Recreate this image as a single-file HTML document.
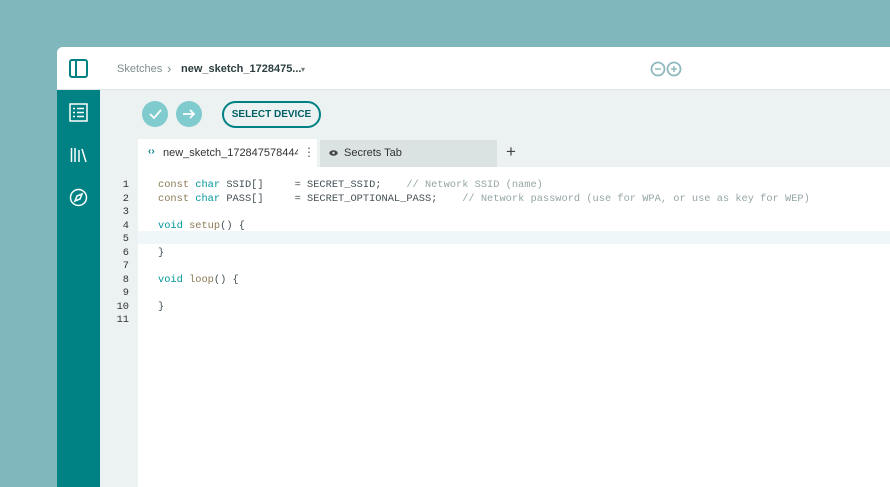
<!DOCTYPE html>
<html><head><style>
*{margin:0;padding:0;box-sizing:border-box}
body{width:890px;height:485px;background:#7fb7bc;position:relative;overflow:hidden;font-family:"Liberation Sans",sans-serif}
.win{position:absolute;left:57px;top:47px;width:840px;height:440px;background:#ecf1f1;border-top-left-radius:6px;overflow:hidden}
.hdr{position:absolute;left:0;top:0;right:0;height:43px;background:#fff;border-bottom:1px solid #e0e6e6}
.side{position:absolute;left:0;top:43px;width:43px;bottom:0;background:#008184}
.abs{position:absolute}
.code{position:absolute;left:81px;top:120px;right:0;bottom:0;background:#fff}
.ln{position:absolute;left:43px;width:38px;text-align:right;padding-right:9px;font-family:"Liberation Mono",monospace;font-size:10.35px;color:#333}
.cl{position:absolute;left:101px;font-family:"Liberation Mono",monospace;font-size:10.35px;color:#434f54;white-space:pre}
.k{color:#00979c}.o{color:#95a5a6}.t{color:#8c7a55}
</style></head><body>
<div class="win">
 <div class="hdr">
  <svg class="abs" style="left:12px;top:12px" width="19" height="19" viewBox="0 0 19 19"><rect x="1" y="1" width="17" height="17" rx="2" fill="none" stroke="#008184" stroke-width="2"/><line x1="7" y1="1" x2="7" y2="18" stroke="#008184" stroke-width="2"/></svg>
  <div class="abs" style="left:60px;top:16px;font-size:11px;color:#7f8c8d">Sketches</div>
  <div class="abs" style="left:110px;top:14px;font-size:13px;color:#7f8c8d">›</div>
  <div class="abs" style="left:124px;top:16px;font-size:11px;font-weight:bold;color:#2c3e40;white-space:nowrap">new_sketch_1728475...</div>
  <div class="abs" style="left:244px;top:18px;font-size:8px;color:#777">▾</div>
  <svg class="abs" style="left:592px;top:14px" width="34" height="16" viewBox="0 0 34 16"><circle cx="9" cy="8" r="6.5" fill="none" stroke="#8fb8be" stroke-width="1.8"/><circle cx="25" cy="8" r="6.5" fill="none" stroke="#8fb8be" stroke-width="1.8"/><line x1="6" y1="8" x2="12" y2="8" stroke="#8fb8be" stroke-width="1.5"/><line x1="22" y1="8" x2="28" y2="8" stroke="#8fb8be" stroke-width="1.5"/><line x1="25" y1="5" x2="25" y2="11" stroke="#8fb8be" stroke-width="1.5"/></svg>
 </div>
 <div class="side">
  <svg class="abs" style="left:12px;top:13px" width="19" height="19" viewBox="0 0 19 19" fill="none" stroke="#fff" stroke-width="1.5"><rect x="1" y="1" width="17" height="17"/><path d="M4 5.5h2M8 5.5h7M4 9.5h2M8 9.5h7M4 13.5h2M8 13.5h7"/></svg>
  <svg class="abs" style="left:13px;top:57px" width="18" height="16" viewBox="0 0 18 16" fill="none" stroke="#fff" stroke-width="1.5"><path d="M1.5 1v14M5 1v14M9 3v12M12 2l4 13"/></svg>
  <svg class="abs" style="left:12px;top:98px" width="19" height="19" viewBox="0 0 19 19" fill="none" stroke="#fff" stroke-width="1.5"><circle cx="9.5" cy="9.5" r="8"/><path d="M13 6l-2 5-5 2 2-5z"/></svg>
 </div>
 <div class="abs" style="left:85px;top:54px;width:26px;height:26px;border-radius:50%;background:#7fcbcd"><svg width="26" height="26"><path d="M8 13l4 4 7-8" fill="none" stroke="#fff" stroke-width="1.8"/></svg></div>
 <div class="abs" style="left:119px;top:54px;width:26px;height:26px;border-radius:50%;background:#7fcbcd"><svg width="26" height="26"><path d="M7 13h11M14 9l4 4-4 4" fill="none" stroke="#fff" stroke-width="1.8"/></svg></div>
 <div class="abs" style="left:165px;top:54px;width:99px;height:27px;border:2px solid #008184;border-radius:14px;font-size:10px;font-weight:bold;color:#006166;text-align:center;line-height:23px">SELECT DEVICE</div>
 <div class="abs" style="left:81px;top:92px;width:179px;height:28px;background:#fff"></div>
 <div class="abs" style="left:91px;top:99px;font-size:10px;color:#008184;font-weight:bold">‹›</div>
 <div class="abs" style="left:106px;top:100px;font-size:11px;color:#333;width:135px;overflow:hidden;white-space:nowrap">new_sketch_1728475784440</div>
 <div class="abs" style="left:246px;top:98px;font-size:12px;color:#555">⋮</div>
 <div class="abs" style="left:263px;top:93px;width:177px;height:27px;background:#dae2e2"></div>
 <svg class="abs" style="left:272px;top:103px" width="9" height="6"><ellipse cx="4.5" cy="3" rx="4.2" ry="2.7" fill="#444"/><circle cx="4.5" cy="3" r="1.2" fill="#dae2e2"/></svg>
 <div class="abs" style="left:287px;top:100px;font-size:11px;color:#333">Secrets Tab</div>
 <div class="abs" style="left:449px;top:95px;font-size:17px;color:#444">+</div>
 <div class="code"></div>
 <div class="abs" style="left:81px;top:184px;right:0;height:13px;background:#f0f7f8"></div>
 <div class="ln" style="top:132px">1</div><div class="ln" style="top:145.5px">2</div><div class="ln" style="top:159px">3</div><div class="ln" style="top:172.5px">4</div><div class="ln" style="top:186px">5</div><div class="ln" style="top:199.5px">6</div><div class="ln" style="top:213px">7</div><div class="ln" style="top:226.5px">8</div><div class="ln" style="top:240px">9</div><div class="ln" style="top:253.5px">10</div><div class="ln" style="top:267px">11</div>
 <div class="cl" style="top:132px"><span class="t">const</span> <span class="k">char</span> SSID[]     = SECRET_SSID;    <span class="o">// Network SSID (name)</span></div>
 <div class="cl" style="top:145.5px"><span class="t">const</span> <span class="k">char</span> PASS[]     = SECRET_OPTIONAL_PASS;    <span class="o">// Network password (use for WPA, or use as key for WEP)</span></div>
 <div class="cl" style="top:172.5px"><span class="k">void</span> <span class="t">setup</span>() {</div>
 <div class="cl" style="top:199.5px">}</div>
 <div class="cl" style="top:226.5px"><span class="k">void</span> <span class="t">loop</span>() {</div>
 <div class="cl" style="top:253.5px">}</div>
</div>
</body></html>
